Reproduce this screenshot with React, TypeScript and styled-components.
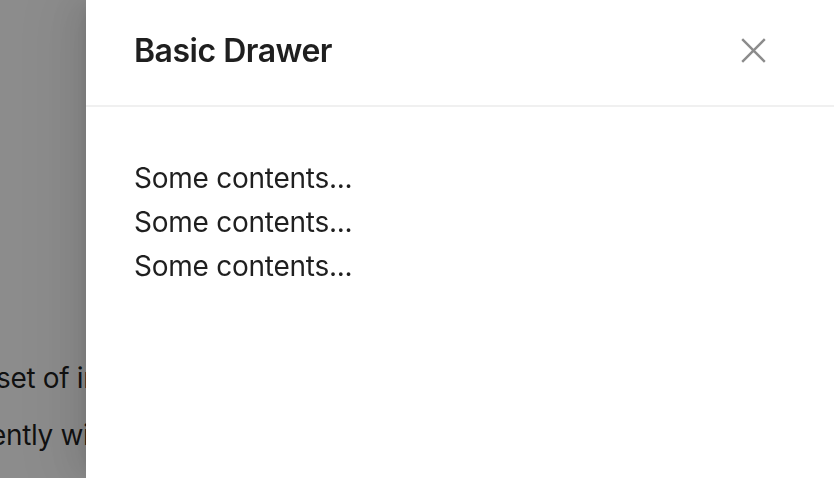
import React from "react";
import styled, { createGlobalStyle } from "styled-components";

const GlobalStyle = createGlobalStyle`
  html,
  body {
    margin: 0;
    padding: 0;
    background: #fff;
  }

  body {
    font-family: Inter, "Noto Sans", "Liberation Sans", sans-serif;
    color: rgba(0, 0, 0, 0.88);
    overflow: hidden;
  }
`;

const lines = ["Some contents...", "Some contents...", "Some contents..."];

const App = () => (
  <>
    <GlobalStyle />
    <Page>
      <Backdrop>
        <BackLine $indent={-4}>set of interactions that feel natural and consistent</BackLine>
        <BackLine $indent={-10}>ently with the rest of the design system components</BackLine>
      </Backdrop>
    </Page>
    <Mask />
    <Drawer>
      <Header>
        <Title>Basic Drawer</Title>
        <CloseButton aria-label="Close">
          <svg width="25" height="25" viewBox="0 0 25 25" fill="none">
            <path
              d="M1.2 1.2L23.8 23.8M23.8 1.2L1.2 23.8"
              stroke="#8c8c8c"
              strokeWidth="2.4"
            />
          </svg>
        </CloseButton>
      </Header>
      <Body>
        {lines.map((text, i) => (
          <Line key={i}>{text}</Line>
        ))}
      </Body>
    </Drawer>
  </>
);

const Page = styled.div`
  width: 100%;
  height: 100vh;
  overflow: hidden;
`;

const Backdrop = styled.div`
  display: flex;
  flex-direction: column;
  padding-top: 350px;
`;

const BackLine = styled.div<{ $indent: number }>`
  margin-left: ${(p) => p.$indent}px;
  font-size: 28px;
  line-height: 57px;
  letter-spacing: -0.35px;
  white-space: nowrap;
  color: rgba(0, 0, 0, 0.88);
`;

const Mask = styled.div`
  position: fixed;
  inset: 0;
  background: rgba(0, 0, 0, 0.45);
`;

const Drawer = styled.div`
  position: fixed;
  top: 0;
  right: 0;
  bottom: 0;
  width: 748px;
  display: flex;
  flex-direction: column;
  background: #fff;
  box-shadow:
    -12px 0 32px 0 rgba(0, 0, 0, 0.08),
    -6px 0 12px -8px rgba(0, 0, 0, 0.12),
    -18px 0 56px 16px rgba(0, 0, 0, 0.05);
`;

const Header = styled.div`
  display: flex;
  align-items: center;
  justify-content: space-between;
  height: 107px;
  padding: 0 68px 4px 48px;
  box-sizing: border-box;
  border-bottom: 2px solid #f0f0f0;
`;

const Title = styled.div`
  font-size: 32px;
  font-weight: 600;
  line-height: 44px;
  letter-spacing: -0.5px;
  color: rgba(0, 0, 0, 0.88);
`;

const CloseButton = styled.button`
  display: flex;
  align-items: center;
  justify-content: center;
  padding: 0;
  border: 0;
  background: transparent;
  cursor: pointer;
`;

const Body = styled.div`
  display: flex;
  flex-direction: column;
  padding: 49px 48px 48px;
`;

const Line = styled.p`
  margin: 0;
  font-size: 28px;
  line-height: 44px;
  letter-spacing: -0.25px;
  color: rgba(0, 0, 0, 0.88);
`;

export default App;
